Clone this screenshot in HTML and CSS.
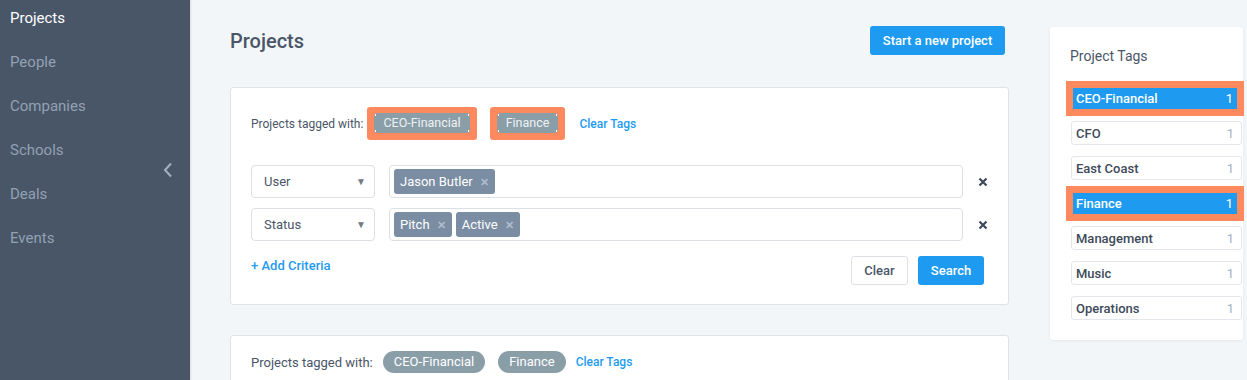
FILE: index.html
```html
<!DOCTYPE html>
<html lang="en">

<head>
    <meta charset="UTF-8">
    <title>Projects</title>
    <link rel="stylesheet" href="styles.css">
</head>

<body>
    <aside class="sidebar">
        <nav class="nav">
            <a class="nav-item active" href="#">Projects</a>
            <a class="nav-item" href="#">People</a>
            <a class="nav-item" href="#">Companies</a>
            <a class="nav-item" href="#">Schools</a>
            <a class="nav-item" href="#">Deals</a>
            <a class="nav-item" href="#">Events</a>
        </nav>
        <span class="collapse">
            <svg width="10" height="16" viewBox="0 0 10 16"><path d="M8 1.5 L2 8 L8 14.5" fill="none" stroke="#a3b0c0" stroke-width="2"/></svg>
        </span>
    </aside>

    <main class="main">
        <section class="content">
            <header class="page-head">
                <h1 class="page-title">Projects</h1>
                <button class="btn btn-primary btn-new">Start a new project</button>
            </header>

            <div class="card filter-card">
                <div class="tag-line">
                    <span class="tag-label">Projects tagged with:</span>
                    <span class="mark"><span class="tag-chip">CEO-Financial</span></span>
                    <span class="mark"><span class="tag-chip">Finance</span></span>
                    <a class="link clear-tags" href="#">Clear Tags</a>
                </div>

                <div class="criteria-row first">
                    <div class="select">User <span class="caret">&#9660;</span></div>
                    <div class="token-input">
                        <span class="token">Jason Butler <i class="token-x">&#10005;</i></span>
                    </div>
                    <span class="remove">
                        <svg width="10" height="10" viewBox="0 0 10 10"><path d="M1.5 1.5 L8.5 8.5 M8.5 1.5 L1.5 8.5" stroke="#3e4a5a" stroke-width="2.2"/></svg>
                    </span>
                </div>
                <div class="criteria-row">
                    <div class="select">Status <span class="caret">&#9660;</span></div>
                    <div class="token-input">
                        <span class="token">Pitch <i class="token-x">&#10005;</i></span>
                        <span class="token">Active <i class="token-x">&#10005;</i></span>
                    </div>
                    <span class="remove">
                        <svg width="10" height="10" viewBox="0 0 10 10"><path d="M1.5 1.5 L8.5 8.5 M8.5 1.5 L1.5 8.5" stroke="#3e4a5a" stroke-width="2.2"/></svg>
                    </span>
                </div>

                <div class="criteria-foot">
                    <a class="link add-criteria" href="#">+ Add Criteria</a>
                    <div class="foot-buttons">
                        <button class="btn btn-light">Clear</button>
                        <button class="btn btn-primary">Search</button>
                    </div>
                </div>
            </div>

            <div class="card results-card">
                <div class="tag-line small">
                    <span class="tag-label">Projects tagged with:</span>
                    <span class="pill">CEO-Financial</span>
                    <span class="pill">Finance</span>
                    <a class="link clear-tags" href="#">Clear Tags</a>
                </div>
            </div>
        </section>

        <aside class="tags-panel">
            <h2 class="panel-title">Project Tags</h2>
            <ul class="tag-list">
                <li class="tag-item selected"><span>CEO-Financial</span><span class="count">1</span></li>
                <li class="tag-item"><span>CFO</span><span class="count">1</span></li>
                <li class="tag-item"><span>East Coast</span><span class="count">1</span></li>
                <li class="tag-item selected"><span>Finance</span><span class="count">1</span></li>
                <li class="tag-item"><span>Management</span><span class="count">1</span></li>
                <li class="tag-item"><span>Music</span><span class="count">1</span></li>
                <li class="tag-item"><span>Operations</span><span class="count">1</span></li>
            </ul>
        </aside>
    </main>
</body>

</html>
```

FILE: styles.css
```css
* {
    box-sizing: border-box;
}

body {
    margin: 0;
    display: flex;
    height: 380px;
    overflow: hidden;
    background-color: #f3f6f9;
    font-family: Roboto, "Liberation Sans", sans-serif;
    color: #3e4a5a;
}

/* sidebar */
.sidebar {
    position: relative;
    flex: 0 0 190px;
    background-color: #485668;
    box-shadow: 1px 0 0 #dfe3e8, 2px 0 0 #eef1f4;
}

.nav {
    display: flex;
    flex-direction: column;
    margin-top: -4px;
}

.nav-item {
    height: 44px;
    line-height: 44px;
    padding-left: 10px;
    font-size: 15px;
    color: #93a1b2;
    text-decoration: none;
}

.nav-item.active {
    color: #fff;
}

.collapse {
    position: absolute;
    left: 163px;
    top: 162px;
}

/* main */
.main {
    display: flex;
    align-items: flex-start;
    padding: 26px 0 0 40px;
}

.content {
    width: 779px;
}

.page-head {
    display: flex;
    justify-content: space-between;
    align-items: center;
    height: 29px;
    padding-right: 4px;
}

.page-title {
    margin: 0;
    font-size: 20px;
    font-weight: 500;
    color: #4a5668;
}

.btn {
    height: 29px;
    border-radius: 3px;
    font-family: inherit;
    font-size: 13px;
    font-weight: 500;
    cursor: pointer;
}

.btn-primary {
    border: none;
    background-color: #1e9bf0;
    color: #fff;
}

.btn-new {
    width: 135px;
}

.btn-light {
    border: 1px solid #dde1e6;
    background-color: #fff;
    color: #4a5668;
}

.card {
    background-color: #fff;
    border: 1px solid #dfe3e8;
    border-radius: 3px;
}

.filter-card {
    margin-top: 32px;
    padding: 19px 20px 19px;
}

.tag-line {
    display: flex;
    align-items: center;
    height: 33px;
}

.tag-label {
    font-size: 12px;
    color: #4a5668;
    margin-right: 4px;
}

.mark {
    background-color: #fd8a5e;
    border-radius: 3px;
    padding: 6px 7px 7px;
    margin-right: 13px;
}

.tag-chip {
    position: relative;
    display: block;
    height: 20px;
    line-height: 20px;
    padding: 0 9px;
    border-radius: 4px;
    background-color: #8a9ea8;
    color: #eef2f4;
    font-size: 12.5px;
}

/* selection handles at the chip corners */
.tag-chip::before,
.tag-chip::after {
    content: "";
    position: absolute;
    top: 1px;
    bottom: 1px;
    width: 1px;
    background: linear-gradient(#fff 0 2px, transparent 2px calc(100% - 2px), #fff calc(100% - 2px));
}

.tag-chip::before {
    left: 1px;
}

.tag-chip::after {
    right: 1px;
}

.link {
    color: #1e9bf0;
    font-weight: 500;
    text-decoration: none;
}

.clear-tags {
    font-size: 12px;
    margin-left: 1px;
}

.criteria-row {
    display: flex;
    align-items: center;
    margin-top: 10px;
}

.criteria-row.first {
    margin-top: 25px;
}

.select {
    display: flex;
    justify-content: space-between;
    align-items: center;
    width: 124px;
    height: 33px;
    padding: 0 8px 0 12px;
    border: 1px solid #dcdfe3;
    border-radius: 4px;
    font-size: 13px;
    color: #4a5668;
}

.caret {
    font-size: 10px;
    color: #717a86;
}

.token-input {
    display: flex;
    align-items: center;
    gap: 4px;
    width: 574px;
    height: 33px;
    margin-left: 14px;
    padding: 0 4px;
    border: 1px solid #dcdfe3;
    border-radius: 4px;
}

.token {
    height: 25px;
    line-height: 25px;
    padding: 0 6px;
    border-radius: 3px;
    background-color: #7a8da3;
    color: #fff;
    font-size: 13px;
}

.token-x {
    font-style: normal;
    font-weight: 700;
    font-size: 11px;
    color: #b0bccb;
    margin-left: 4px;
}

.remove {
    margin-left: auto;
    line-height: 0;
}

.criteria-foot {
    display: flex;
    justify-content: space-between;
    margin-top: 15px;
}

.add-criteria {
    font-size: 13px;
    line-height: 20px;
}

.foot-buttons {
    display: flex;
    gap: 10px;
    margin-right: 4px;
}

.foot-buttons .btn-light {
    width: 57px;
}

.foot-buttons .btn-primary {
    width: 66px;
}

.results-card {
    margin-top: 30px;
    padding: 15px 20px;
    height: 80px;
}

.tag-line.small {
    height: 22px;
}

.tag-line.small .tag-label {
    font-size: 13px;
    margin-right: 10px;
}

.pill {
    height: 22px;
    line-height: 22px;
    padding: 0 11px;
    border-radius: 11px;
    background-color: #8a9ea8;
    color: #fff;
    font-size: 13px;
    margin-right: 13px;
}

.tag-line.small .clear-tags {
    margin-left: -3px;
}

/* right panel */
.tags-panel {
    width: 193px;
    margin: 1px 0 0 41px;
    padding: 19px 1px 20px 21px;
    background-color: #fff;
    border-radius: 3px;
    box-shadow: 0 1px 3px rgba(40, 60, 80, 0.08);
}

.panel-title {
    margin: 0 0 20px -1px;
    font-size: 14px;
    font-weight: 400;
    line-height: 20px;
    color: #4a5668;
}

.tag-list {
    list-style: none;
    margin: 0;
    padding: 0;
    display: flex;
    flex-direction: column;
    gap: 11px;
}

.tag-item {
    display: flex;
    justify-content: space-between;
    align-items: center;
    height: 24px;
    padding: 0 7px 0 4px;
    border: 1px solid #e3e7eb;
    border-radius: 3px;
    font-size: 13px;
    font-weight: 500;
    color: #3e4a5a;
}

.count {
    font-weight: 400;
    color: #a3b1c0;
}

.tag-item.selected {
    height: 21px;
    margin: 2px 5px 1px 2px;
    padding: 0 4px 0 3px;
    border: none;
    border-radius: 0;
    background-color: #1e9bf0;
    color: #fff;
    box-shadow: 0 0 0 7px #fd8a5e;
}

.tag-item.selected .count {
    color: #fff;
}
```
